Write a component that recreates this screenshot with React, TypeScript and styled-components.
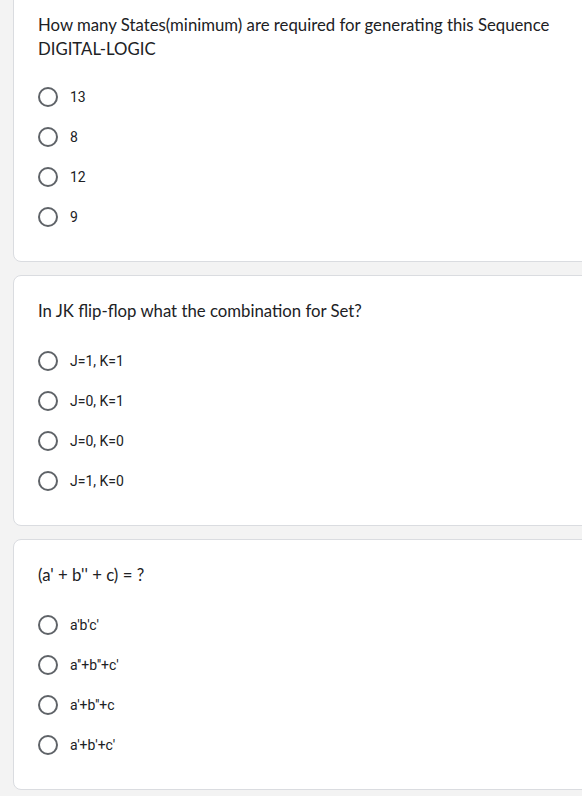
import * as React from 'react';
import styled, { createGlobalStyle } from 'styled-components';

const GlobalStyle = createGlobalStyle`
  html, body {
    margin: 0;
    padding: 0;
    background: #f3f3f3;
  }
`

const Frame = styled.div`
  width: 100%;
  height: 100vh;
  overflow: hidden;
`

const Page = styled.div`
  display: flex;
  flex-direction: column;
  gap: 13px;
  margin-top: -11px;
  padding-left: 13px;
  width: 640px;
`

const Card = styled.div`
  display: flex;
  flex-direction: column;
  gap: 18px;
  background: #fff;
  border: 1px solid #dadce0;
  border-radius: 8px;
  padding: 23px 24px 24px;
`

const Question = styled.div<{ $wrap?: boolean }>`
  font-family: Lato, "Open Sans", sans-serif;
  font-size: 16.75px;
  line-height: 24px;
  color: #202124;
  white-space: nowrap;
  margin-bottom: ${p => (p.$wrap ? '-2px' : '0')};
`

const Options = styled.div`
  display: flex;
  flex-direction: column;
`

const Option = styled.label`
  display: flex;
  align-items: center;
  gap: 12px;
  height: 40px;
  font-family: Roboto, "Liberation Sans", sans-serif;
  font-size: 14px;
  color: #202124;
`

const Radio = styled.span`
  box-sizing: border-box;
  width: 20px;
  height: 20px;
  border: 2px solid #5f6368;
  border-radius: 50%;
  flex-shrink: 0;
`

interface QuestionData {
  title: string[]
  options: string[]
}

const questions: QuestionData[] = [
  {
    title: ['How many States(minimum) are required for generating this Sequence', 'DIGITAL-LOGIC'],
    options: ['13', '8', '12', '9'],
  },
  {
    title: ['In JK flip-flop what the combination for Set?'],
    options: ['J=1, K=1', 'J=0, K=1', 'J=0, K=0', 'J=1, K=0'],
  },
  {
    title: ["(a' + b'' + c) = ?"],
    options: ["a'b'c'", "a''+b''+c'", "a'+b''+c", "a'+b'+c'"],
  },
]

export default function App() {
  return (
    <>
      <GlobalStyle />
      <Frame>
        <Page>
          {questions.map((q, i) => (
            <Card key={i}>
              <Question $wrap={q.title.length > 1}>
                {q.title.map((line, j) => (
                  <div key={j}>{line}</div>
                ))}
              </Question>
              <Options>
                {q.options.map(opt => (
                  <Option key={opt}>
                    <Radio />
                    <span>{opt}</span>
                  </Option>
                ))}
              </Options>
            </Card>
          ))}
        </Page>
      </Frame>
    </>
  )
}
